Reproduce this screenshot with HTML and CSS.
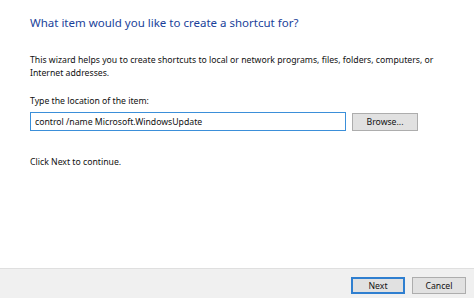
FILE: index.html
```html
<!DOCTYPE html>
<html lang="en">
<head>
  <meta charset="UTF-8">
  <title>Create Shortcut</title>
  <link rel="stylesheet" href="styles.css">
</head>
<body>
  <div class="wizard">
    <div class="content">
      <h1 class="instruction">What item would you like to create a shortcut for?</h1>

      <p class="intro">This wizard helps you to create shortcuts to local or network programs, files, folders, computers, or Internet addresses.</p>

      <label class="field-label" for="location">Type the location of the item:</label>
      <div class="field-row">
        <input type="text" id="location" class="location" value="control /name Microsoft.WindowsUpdate">
        <button class="btn">Browse...</button>
      </div>

      <p class="hint">Click Next to continue.</p>
    </div>

    <div class="footer">
      <button class="btn btn-default">Next</button>
      <button class="btn">Cancel</button>
    </div>
  </div>
</body>
</html>
```

FILE: styles.css
```css
body {
  margin: 0;
  padding: 0;
  background: #fff;
  font-family: 'Noto Sans', 'Open Sans', sans-serif;
  font-size: 8.7px;
  color: #111;
}

.wizard {
  height: 298px;
  display: flex;
  flex-direction: column;
}

.content {
  flex: 1;
  padding: 15px 0 0 30px;
}

.instruction {
  margin: 0;
  font-size: 11.5px;
  font-weight: normal;
  color: #1a3f9a;
  line-height: 16px;
}

.intro {
  margin: 23px 0 0;
  width: 410px;
  line-height: 13px;
}

.field-label {
  display: block;
  margin-top: 15px;
  line-height: 13px;
}

.field-row {
  display: flex;
  align-items: center;
  gap: 6px;
  margin-top: 4px;
}

.location {
  width: 316px;
  height: 19px;
  box-sizing: border-box;
  border: 1px solid #3b8fd9;
  padding: 0 4px;
  font-family: inherit;
  font-size: 8.7px;
  color: #111;
  outline: none;
}

.btn {
  width: 66px;
  height: 18px;
  box-sizing: border-box;
  background: #e1e1e1;
  border: 1px solid #adadad;
  font-family: inherit;
  font-size: 8.7px;
  color: #111;
  padding: 0;
}

.hint {
  margin: 25px 0 0;
  line-height: 13px;
}

.footer {
  height: 30px;
  background: #f0f0f0;
  border-top: 1px solid #dfdfdf;
  display: flex;
  justify-content: flex-end;
  align-items: flex-start;
  gap: 7px;
  padding: 8px 8px 0 0;
  box-sizing: border-box;
}

.footer .btn {
  width: 54px;
  height: 17px;
}

.btn-default {
  border: 1px solid #2f7fd0;
  box-shadow: inset 0 0 0 1px #2f7fd0;
}
```
